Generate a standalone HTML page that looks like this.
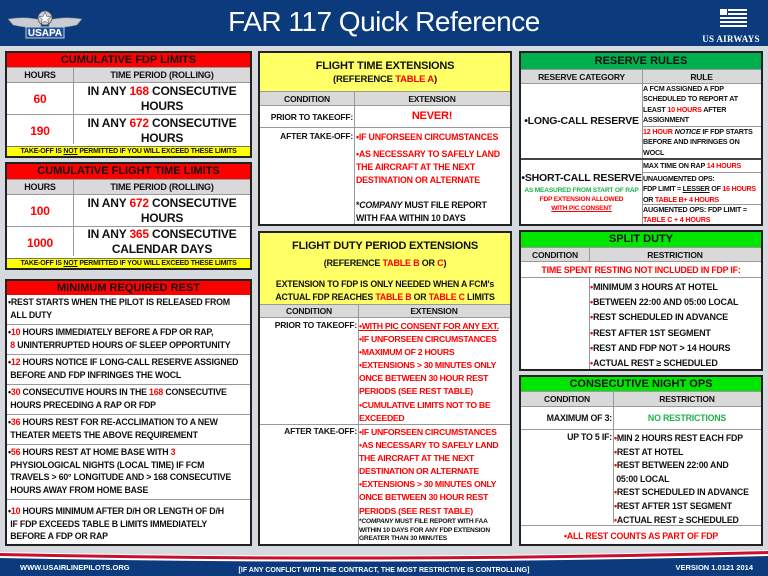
<!DOCTYPE html>
<html><head><meta charset="utf-8">
<style>
*{margin:0;padding:0;box-sizing:border-box}
body{width:768px;height:576px;overflow:hidden;background:#d6dadf;font-family:"Liberation Sans",sans-serif;font-weight:bold;color:#111;position:relative}
.a{position:absolute}
.box{position:absolute;border:2px solid #222;background:#fff;overflow:hidden}
.hd{position:absolute;left:0;right:0;text-align:center;color:#111}
.red{color:#f00}
.grn{color:#1db14b}
.row{position:absolute;left:0;right:0;border-top:1px solid #999}
.gh{background:#d9d9d9;border-top:1px solid #999;border-bottom:1px solid #999}
.vl{position:absolute;top:0;bottom:0;border-left:1px solid #999}
.c{text-align:center}
.t{position:absolute;font-size:8px;line-height:10px;letter-spacing:-0.2px;white-space:nowrap}
</style></head><body>
<div class="a" style="left:0;top:0;width:768px;height:46px;background:#0b3b7c"></div>
<svg class="a" style="left:5px;top:6px" width="80" height="34" viewBox="0 0 80 34">
<path d="M3 13 Q20 10 36 14 L36 22 Q20 22 8 19 Z" fill="#c9ccd2" stroke="#777" stroke-width=".6"/>
<path d="M77 13 Q60 10 44 14 L44 22 Q60 22 72 19 Z" fill="#c9ccd2" stroke="#777" stroke-width=".6"/>
<circle cx="40" cy="12" r="7" fill="#c9ccd2" stroke="#555" stroke-width=".8"/>
<polygon points="40,6 41.8,10.5 46,10.7 42.7,13.3 43.8,17.5 40,15 36.2,17.5 37.3,13.3 34,10.7 38.2,10.5" fill="#fff" stroke="#444" stroke-width=".5"/>
<rect x="21" y="21" width="38" height="11" fill="#1b4f9a" stroke="#ccc" stroke-width="1"/>
<text x="40" y="30" font-family="Liberation Sans" font-weight="bold" font-size="10" fill="#fff" text-anchor="middle" stroke="#c9ccd2" stroke-width=".3">USAPA</text>
</svg>
<div class="a" style="left:0;width:768px;top:4px;text-align:center;color:#fff;font-weight:normal;font-size:28px;line-height:36px;letter-spacing:-0.5px">FAR 117 Quick Reference</div>
<svg class="a" style="left:718px;top:8px" width="30" height="20" viewBox="0 0 30 20">
<rect x="2" y="1" width="7" height="6" fill="#fff"/>
<g fill="#fff"><rect x="10" y="1" width="19" height="2"/><rect x="10" y="5" width="19" height="2"/><rect x="2" y="9" width="27" height="2"/><rect x="2" y="13" width="27" height="2"/><rect x="2" y="17" width="27" height="2"/></g>
</svg>
<div class="a" style="left:694px;top:34px;width:74px;color:#fff;font-family:'Liberation Serif',serif;font-size:9px;text-align:center;letter-spacing:.3px">US AIRWAYS</div>

<div class="box" style="left:5px;top:51px;width:247px;height:107px">
 <div class="hd" style="top:0;height:14px;background:#f00;font-size:11px;line-height:14px">CUMULATIVE FDP LIMITS</div>
 <div class="row gh" style="top:14px;height:16px"></div>
 <div class="t c" style="left:0;width:66px;top:17px;font-size:9px">HOURS</div>
 <div class="t c" style="left:66px;width:178px;top:17px;font-size:9px">TIME PERIOD (ROLLING)</div>
 <div class="row" style="top:61px;height:0"></div>
 <div class="vl" style="left:66px;top:14px;bottom:12px"></div>
 <div class="t c red" style="left:0;width:66px;top:39px;font-size:12px;line-height:14px">60</div>
 <div class="t c" style="left:66px;width:178px;top:31px;font-size:12px;line-height:15px">IN ANY <span class="red">168</span> CONSECUTIVE<br>HOURS</div>
 <div class="t c red" style="left:0;width:66px;top:71px;font-size:12px;line-height:14px">190</div>
 <div class="t c" style="left:66px;width:178px;top:63px;font-size:12px;line-height:15px">IN ANY <span class="red">672</span> CONSECUTIVE<br>HOURS</div>
 <div class="row" style="top:93px;height:12px;background:#ff0;border-top:1px solid #777"></div>
 <div class="t c" style="left:0;width:243px;top:94px;font-size:7px">TAKE-OFF IS <u>NOT</u> PERMITTED IF YOU WILL EXCEED THESE LIMITS</div>
</div>
<div class="box" style="left:5px;top:162px;width:247px;height:108px">
 <div class="hd" style="top:0;height:15px;background:#f00;font-size:11px;line-height:15px">CUMULATIVE FLIGHT TIME LIMITS</div>
 <div class="row gh" style="top:15px;height:16px"></div>
 <div class="t c" style="left:0;width:66px;top:18px;font-size:9px">HOURS</div>
 <div class="t c" style="left:66px;width:178px;top:18px;font-size:9px">TIME PERIOD (ROLLING)</div>
 <div class="row" style="top:62px;height:0"></div>
 <div class="vl" style="left:66px;top:15px;bottom:12px"></div>
 <div class="t c red" style="left:0;width:66px;top:40px;font-size:12px;line-height:14px">100</div>
 <div class="t c" style="left:66px;width:178px;top:32px;font-size:12px;line-height:15px">IN ANY <span class="red">672</span> CONSECUTIVE<br>HOURS</div>
 <div class="t c red" style="left:0;width:66px;top:72px;font-size:12px;line-height:14px">1000</div>
 <div class="t c" style="left:66px;width:178px;top:63px;font-size:12px;line-height:15px">IN ANY <span class="red">365</span> CONSECUTIVE<br>CALENDAR DAYS</div>
 <div class="row" style="top:94px;height:12px;background:#ff0;border-top:1px solid #777"></div>
 <div class="t c" style="left:0;width:243px;top:95px;font-size:7px">TAKE-OFF IS <u>NOT</u> PERMITTED IF YOU WILL EXCEED THESE LIMITS</div>
</div>
<div class="box" style="left:5px;top:279px;width:247px;height:267px;font-size:9px">
 <div class="hd" style="top:0;height:14px;background:#f00;font-size:11px;line-height:14px">MINIMUM REQUIRED REST</div>
 <div class="t" style="left:1px;top:15px;font-size:8.8px;line-height:12.5px">•REST STARTS WHEN THE PILOT IS RELEASED FROM<br>&nbsp;ALL DUTY</div>
 <div class="row" style="top:43px"></div>
 <div class="t" style="left:1px;top:45px;font-size:8.8px;line-height:12.5px">•<span class="red">10</span> HOURS IMMEDIATELY BEFORE A FDP OR RAP,<br>&nbsp;<span class="red">8</span> UNINTERRUPTED HOURS OF SLEEP OPPORTUNITY</div>
 <div class="row" style="top:73px"></div>
 <div class="t" style="left:1px;top:75px;font-size:8.8px;line-height:12.5px">•<span class="red">12</span> HOURS NOTICE IF LONG-CALL RESERVE ASSIGNED<br>&nbsp;BEFORE AND FDP INFRINGES THE WOCL</div>
 <div class="row" style="top:103px"></div>
 <div class="t" style="left:1px;top:105px;font-size:8.8px;line-height:12.5px">•<span class="red">30</span> CONSECUTIVE HOURS IN THE <span class="red">168</span> CONSECUTIVE<br>&nbsp;HOURS PRECEDING A RAP OR FDP</div>
 <div class="row" style="top:133px"></div>
 <div class="t" style="left:1px;top:135px;font-size:8.8px;line-height:12.5px">•<span class="red">36</span> HOURS REST FOR RE-ACCLIMATION TO A NEW<br>&nbsp;THEATER MEETS THE ABOVE REQUIREMENT</div>
 <div class="row" style="top:163px"></div>
 <div class="t" style="left:1px;top:165px;font-size:8.8px;line-height:12.7px">•<span class="red">56</span> HOURS REST AT HOME BASE WITH <span class="red">3</span><br>&nbsp;PHYSIOLOGICAL NIGHTS (LOCAL TIME) IF FCM<br>&nbsp;TRAVELS &gt; 60° LONGITUDE AND &gt; 168 CONSECUTIVE<br>&nbsp;HOURS AWAY FROM HOME BASE</div>
 <div class="row" style="top:218px"></div>
 <div class="t" style="left:1px;top:224px;font-size:8.8px;line-height:12.7px">•<span class="red">10</span> HOURS MINIMUM AFTER D/H OR LENGTH OF D/H<br>&nbsp;IF FDP EXCEEDS TABLE B LIMITS IMMEDIATELY<br>&nbsp;BEFORE A FDP OR RAP</div>
</div>

<div class="box" style="left:258px;top:51px;width:254px;height:175px">
 <div class="hd" style="top:0;height:38px;background:#ffff66"></div>
 <div class="t c" style="left:0;width:250px;top:7px;font-size:11px;line-height:13px">FLIGHT TIME EXTENSIONS</div>
 <div class="t c" style="left:0;width:250px;top:22px;font-size:9.5px">(REFERENCE <span class="red">TABLE A</span>)</div>
 <div class="row gh" style="top:38px;height:15px"></div>
 <div class="vl" style="left:94px;top:38px"></div>
 <div class="t c" style="left:0;width:94px;top:41px;font-size:8.5px">CONDITION</div>
 <div class="t c" style="left:94px;width:156px;top:41px;font-size:8.5px">EXTENSION</div>
 <div class="t" style="left:0;width:93px;top:59px;text-align:right;font-size:8.5px">PRIOR TO TAKEOFF:</div>
 <div class="t c red" style="left:94px;width:156px;top:56px;font-size:11px;line-height:14px">NEVER!</div>
 <div class="row" style="top:74px"></div>
 <div class="t" style="left:0;width:93px;top:78px;text-align:right;font-size:8.5px">AFTER TAKE-OFF:</div>
 <div class="t red" style="left:96px;top:78px;font-size:8.8px;line-height:12.8px">•IF UNFORSEEN CIRCUMSTANCES</div>
 <div class="t red" style="left:96px;top:95px;font-size:8.8px;line-height:12.8px">•AS NECESSARY TO SAFELY LAND<br>THE AIRCRAFT AT THE NEXT<br>DESTINATION OR ALTERNATE</div>
 <div class="t" style="left:96px;top:146px;font-size:8.8px;line-height:12.8px">*<i>COMPANY</i> MUST FILE REPORT<br>WITH FAA WITHIN 10 DAYS</div>
</div>
<div class="box" style="left:258px;top:231px;width:254px;height:315px">
 <div class="hd" style="top:0;height:71px;background:#ffff66"></div>
 <div class="t c" style="left:0;width:250px;top:7px;font-size:11px;line-height:13px">FLIGHT DUTY PERIOD EXTENSIONS</div>
 <div class="t c" style="left:0;width:250px;top:25px;font-size:9px">(REFERENCE <span class="red">TABLE B</span> OR <span class="red">C</span>)</div>
 <div class="t c" style="left:0;width:250px;top:45px;font-size:8.8px;line-height:12.5px">EXTENSION TO FDP IS ONLY NEEDED WHEN A FCM's<br>ACTUAL FDP REACHES <span class="red">TABLE B</span> OR <span class="red">TABLE C</span> LIMITS</div>
 <div class="row gh" style="top:71px;height:14px"></div>
 <div class="vl" style="left:98px;top:71px"></div>
 <div class="t c" style="left:0;width:98px;top:73px;font-size:8.5px">CONDITION</div>
 <div class="t c" style="left:98px;width:152px;top:73px;font-size:8.5px">EXTENSION</div>
 <div class="t" style="left:0;width:97px;top:87px;text-align:right;font-size:8.5px">PRIOR TO TAKEOFF:</div>
 <div class="t red" style="left:99px;top:87px;font-size:8.7px;letter-spacing:-0.3px;line-height:13.1px"><u>•WITH PIC CONSENT FOR ANY EXT.</u><br>•IF UNFORSEEN CIRCUMSTANCES<br>•MAXIMUM OF 2 HOURS<br>•EXTENSIONS &gt; 30 MINUTES ONLY<br>ONCE BETWEEN 30 HOUR REST<br>PERIODS (SEE REST TABLE)<br>•CUMULATIVE LIMITS NOT TO BE<br>EXCEEDED</div>
 <div class="row" style="top:191px"></div>
 <div class="t" style="left:0;width:97px;top:193px;text-align:right;font-size:8.5px">AFTER TAKE-OFF:</div>
 <div class="t red" style="left:99px;top:193px;font-size:8.7px;letter-spacing:-0.3px;line-height:13.1px">•IF UNFORSEEN CIRCUMSTANCES<br>•AS NECESSARY TO SAFELY LAND<br>THE AIRCRAFT AT THE NEXT<br>DESTINATION OR ALTERNATE<br>•EXTENSIONS &gt; 30 MINUTES ONLY<br>ONCE BETWEEN 30 HOUR REST<br>PERIODS (SEE REST TABLE)</div>
 <div class="t" style="left:99px;top:285px;font-size:6.6px;line-height:8.5px">*<i>COMPANY</i> MUST FILE REPORT WITH FAA<br>WITHIN 10 DAYS FOR ANY FDP EXTENSION<br>GREATER THAN 30 MINUTES</div>
</div>

<div class="box" style="left:519px;top:51px;width:244px;height:175px">
 <div class="hd" style="top:0;height:16px;background:#00b050;font-size:11px;line-height:16px">RESERVE RULES</div>
 <div class="row gh" style="top:16px;height:15px"></div>
 <div class="vl" style="left:121px;top:16px"></div>
 <div class="t c" style="left:0;width:121px;top:19px;font-size:8.5px">RESERVE CATEGORY</div>
 <div class="t c" style="left:121px;width:119px;top:19px;font-size:8.5px">RULE</div>
 <div class="t c" style="left:0;width:121px;top:62px;font-size:10.5px;line-height:12px">•LONG-CALL RESERVE</div>
 <div class="t" style="left:122px;top:31px;font-size:7.2px;line-height:10.3px">A FCM ASSIGNED A FDP<br>SCHEDULED TO REPORT AT<br>LEAST <span class="red">10 HOURS</span> AFTER<br>ASSIGNMENT</div>
 <div class="a" style="left:121px;right:0;top:73px;border-top:1px solid #999"></div>
 <div class="t" style="left:122px;top:74px;font-size:7.2px;line-height:10.3px"><span class="red">12 HOUR</span> <i>NOTICE</i> IF FDP STARTS<br>BEFORE AND INFRINGES ON<br>WOCL</div>
 <div class="row" style="top:105px;border-top:2px solid #444"></div>
 <div class="t c" style="left:0;width:121px;top:119px;font-size:10.5px;line-height:12px">•SHORT-CALL RESERVE</div>
 <div class="t c" style="left:0;width:121px;top:133px;font-size:6.6px;line-height:9px"><span class="grn">AS MEASURED FROM START OF RAP</span><br><span class="red">FDP EXTENSION ALLOWED</span><br><span class="red"><u>WITH PIC CONSENT</u></span></div>
 <div class="t" style="left:122px;top:107px;font-size:7.2px;line-height:11px">MAX TIME ON RAP <span class="red">14 HOURS</span></div>
 <div class="a" style="left:121px;right:0;top:119px;border-top:1px solid #999"></div>
 <div class="t" style="left:122px;top:121px;font-size:7.2px;letter-spacing:-0.3px;line-height:10.3px">UNAUGMENTED OPS:<br>FDP LIMIT = <u>LESSER</u> OF <span class="red">16 HOURS</span><br>OR <span class="red">TABLE B+ 4 HOURS</span></div>
 <div class="a" style="left:121px;right:0;top:151px;border-top:1px solid #999"></div>
 <div class="t" style="left:122px;top:152px;font-size:7.2px;line-height:10.3px">AUGMENTED OPS: FDP LIMIT =<br><span class="red">TABLE C + 4 HOURS</span></div>
</div>
<div class="box" style="left:519px;top:230px;width:244px;height:141px">
 <div class="hd" style="top:0;height:15px;background:#00e600;font-size:11px;line-height:15px">SPLIT DUTY</div>
 <div class="row gh" style="top:15px;height:15px"></div>
 <div class="vl" style="left:68px;top:15px;height:15px"></div>
 <div class="t c" style="left:0;width:68px;top:18px;font-size:8.5px">CONDITION</div>
 <div class="t c" style="left:68px;width:172px;top:18px;font-size:8.5px">RESTRICTION</div>
 <div class="t c red" style="left:0;width:240px;top:33px;font-size:8.8px">TIME SPENT RESTING NOT INCLUDED IN FDP IF:</div>
 <div class="row" style="top:45px"></div>
 <div class="vl" style="left:68px;top:45px"></div>
 <div class="t" style="left:69px;top:48px;font-size:9px;line-height:15.2px"><span class="red">•</span>MINIMUM 3 HOURS AT HOTEL<br><span class="red">•</span>BETWEEN 22:00 AND 05:00 LOCAL<br><span class="red">•</span>REST SCHEDULED IN ADVANCE<br><span class="red">•</span>REST AFTER 1ST SEGMENT<br><span class="red">•</span>REST AND FDP NOT &gt; 14 HOURS<br><span class="red">•</span>ACTUAL REST ≥ SCHEDULED</div>
</div>
<div class="box" style="left:519px;top:375px;width:244px;height:171px">
 <div class="hd" style="top:0;height:14px;background:#00e600;font-size:11px;line-height:14px">CONSECUTIVE NIGHT OPS</div>
 <div class="row gh" style="top:14px;height:16px"></div>
 <div class="vl" style="left:92px;top:14px;bottom:21px"></div>
 <div class="t c" style="left:0;width:92px;top:17px;font-size:8.5px">CONDITION</div>
 <div class="t c" style="left:92px;width:148px;top:17px;font-size:8.5px">RESTRICTION</div>
 <div class="t" style="left:0;width:91px;top:36px;text-align:right;font-size:8.8px">MAXIMUM OF 3:</div>
 <div class="t c grn" style="left:92px;width:148px;top:36px;font-size:8.8px">NO RESTRICTIONS</div>
 <div class="row" style="top:52px"></div>
 <div class="t" style="left:0;width:91px;top:55px;text-align:right;font-size:8.8px">UP TO 5 IF:</div>
 <div class="t" style="left:93px;top:55px;font-size:8.8px;line-height:13.6px"><span class="red">•</span>MIN 2 HOURS REST EACH FDP<br><span class="red">•</span>REST AT HOTEL<br><span class="red">•</span>REST BETWEEN 22:00 AND<br>&nbsp;05:00 LOCAL<br><span class="red">•</span>REST SCHEDULED IN ADVANCE<br><span class="red">•</span>REST AFTER 1ST SEGMENT<br><span class="red">•</span>ACTUAL REST ≥ SCHEDULED</div>
 <div class="row" style="top:148px"></div>
 <div class="t c red" style="left:0;width:240px;top:154px;font-size:8.8px">•ALL REST COUNTS AS PART OF FDP</div>
</div>

<svg class="a" style="left:0;top:546px" width="768" height="30" viewBox="0 0 768 30">
<path d="M0 6 Q384 14 768 4 L768 30 L0 30 Z" fill="#fff"/>
<path d="M0 7 Q384 15 768 5 L768 8 Q384 18 0 10 Z" fill="#c8102e"/>
<path d="M0 12 Q384 20 768 10 L768 30 L0 30 Z" fill="#0b3b7c"/>
</svg>
<div class="a" style="left:20px;top:563px;color:#fff;font-size:7.5px">WWW.USAIRLINEPILOTS.ORG</div>
<div class="a" style="left:0;width:768px;top:567px;text-align:center;color:#fff;font-size:7px">[IF ANY CONFLICT WITH THE CONTRACT, THE MOST RESTRICTIVE IS CONTROLLING]</div>
<div class="a" style="right:15px;top:563px;color:#fff;font-size:7.5px">VERSION 1.0121 2014</div>
</body></html>
